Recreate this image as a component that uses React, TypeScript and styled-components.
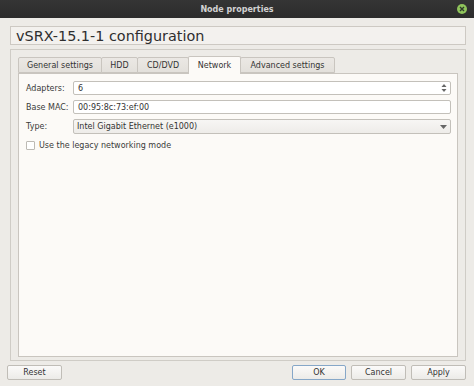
import React, { useState } from 'react';
import styled, { createGlobalStyle } from 'styled-components';

const GlobalStyle = createGlobalStyle`
  html, body {
    margin: 0;
    padding: 0;
    background: #edebe7;
  }
  body {
    font-family: "DejaVu Sans", "Liberation Sans", sans-serif;
    font-size: 8px;
    color: #3c3c3c;
  }
`;

const Window = styled.div`
  width: 474px;
  height: 386px;
  display: flex;
  flex-direction: column;
  background: #edebe7;
  overflow: hidden;
`;

const TitleBar = styled.div`
  height: 18px;
  flex: none;
  display: flex;
  align-items: center;
  justify-content: center;
  position: relative;
  background: linear-gradient(#353535, #2c2c2c);
  color: #d2d2d2;
  font-weight: bold;
  font-size: 8px;
`;

const CloseButton = styled.div`
  position: absolute;
  right: 7px;
  top: 4px;
  width: 10px;
  height: 10px;
  border-radius: 50%;
  background: #8fc45b;
  display: flex;
  align-items: center;
  justify-content: center;
`;

const Body = styled.div`
  flex: 1;
  display: flex;
  flex-direction: column;
  padding: 8px 8px 8px 7px;
  gap: 4px;
`;

const Header = styled.div`
  height: 19px;
  margin-left: 3px;
  box-sizing: border-box;
  border: 1px solid #cdc9c3;
  background: #f3f1ee;
  display: flex;
  align-items: center;
  padding-left: 5px;
  font-size: 14.4px;
  color: #2e2e2e;
`;

const GroupBox = styled.div`
  height: 312px;
  margin-left: 3px;
  box-sizing: border-box;
  border: 1px solid #cfccc6;
  padding: 6px 7px 3px 7px;
  display: flex;
  flex-direction: column;
`;

const TabBar = styled.div`
  display: flex;
  align-items: flex-end;
  height: 17px;
  flex: none;
  position: relative;
  z-index: 1;
`;

const Tab = styled.div<{ $w: number; $active?: boolean }>`
  width: ${(p) => p.$w}px;
  box-sizing: border-box;
  height: ${(p) => (p.$active ? 18 : 16)}px;
  margin-bottom: ${(p) => (p.$active ? -1 : 0)}px;
  margin-left: -1px;
  &:first-child {
    margin-left: 0;
  }
  border: 1px solid #c9c5bf;
  border-bottom: ${(p) => (p.$active ? 'none' : '1px solid #c9c5bf')};
  border-radius: 2px 2px 0 0;
  background: ${(p) => (p.$active ? '#fcfaf7' : 'linear-gradient(#ebe8e4, #e3e0db)')};
  display: flex;
  align-items: center;
  justify-content: center;
  padding-top: ${(p) => (p.$active ? 0 : 1)}px;
  color: #333;
  z-index: ${(p) => (p.$active ? 2 : 1)};
`;

const Panel = styled.div`
  flex: 1;
  border: 1px solid #c9c5bf;
  background: #fcfaf7;
  padding: 7px 6px 0 7px;
  display: flex;
  flex-direction: column;
`;

const FormGrid = styled.div`
  display: grid;
  grid-template-columns: 47px 1fr;
  row-gap: 5px;
  align-items: center;
`;

const Label = styled.div`
  font-size: 8px;
  color: #3a3a3a;
`;

const Field = styled.div<{ $combo?: boolean }>`
  height: ${(p) => (p.$combo ? 15 : 14)}px;
  box-sizing: border-box;
  border: 1px solid #c3c0ba;
  border-radius: 2px;
  background: ${(p) => (p.$combo ? 'linear-gradient(#f7f6f4, #eeece9)' : '#ffffff')};
  display: flex;
  align-items: center;
  padding-left: ${(p) => (p.$combo ? 3 : 4)}px;
  padding-right: 3px;
  color: #333;
`;

const FieldText = styled.span`
  flex: 1;
`;

const CheckRow = styled.label`
  display: flex;
  align-items: center;
  gap: 4px;
  margin-top: 7px;
  color: #3a3a3a;
`;

const CheckBox = styled.span`
  width: 9px;
  height: 9px;
  box-sizing: border-box;
  border: 1px solid #bdbab4;
  border-radius: 1px;
  background: #fff;
`;

const ButtonRow = styled.div`
  display: flex;
  align-items: center;
  height: 15px;
  gap: 5px;
`;

const Spacer = styled.div`
  flex: 1;
`;

const Button = styled.button<{ $default?: boolean }>`
  width: ${(p) => (p.$default ? 54 : 55)}px;
  height: 15px;
  box-sizing: border-box;
  border: 1px solid ${(p) => (p.$default ? '#86a7c8' : '#c0bdb7')};
  border-radius: 2px;
  background: linear-gradient(#fbfaf9, #ecebe8);
  font-family: inherit;
  font-size: 8px;
  color: #333;
  padding: 0;
`;

const SpinArrows = () => (
  <svg width="6" height="10" viewBox="0 0 6 10">
    <path d="M0.5 4 L3 1 L5.5 4 Z" fill="#666" />
    <path d="M0.5 6 L3 9 L5.5 6 Z" fill="#666" />
  </svg>
);

const ComboArrow = () => (
  <svg width="7" height="4" viewBox="0 0 7 4">
    <path d="M0 0 L7 0 L3.5 4 Z" fill="#666" />
  </svg>
);

const tabs = [
  { name: 'General settings', w: 84 },
  { name: 'HDD', w: 37 },
  { name: 'CD/DVD', w: 52 },
  { name: 'Network', w: 53 },
  { name: 'Advanced settings', w: 95 },
];

export default function App() {
  const [active, setActive] = useState('Network');
  const [legacy, setLegacy] = useState(false);

  return (
    <Window>
      <GlobalStyle />
      <TitleBar>
        Node properties
        <CloseButton>
          <svg width="6" height="6" viewBox="0 0 6 6">
            <path d="M1 1 L5 5 M5 1 L1 5" stroke="#2f3a2a" strokeWidth="1.4" />
          </svg>
        </CloseButton>
      </TitleBar>
      <Body>
        <Header>vSRX-15.1-1 configuration</Header>
        <GroupBox>
          <TabBar>
            {tabs.map((t) => (
              <Tab key={t.name} $w={t.w} $active={active === t.name} onClick={() => setActive(t.name)}>
                {t.name}
              </Tab>
            ))}
          </TabBar>
          <Panel>
            <FormGrid>
              <Label>Adapters:</Label>
              <Field>
                <FieldText>6</FieldText>
                <SpinArrows />
              </Field>
              <Label>Base MAC:</Label>
              <Field>
                <FieldText>00:95:8c:73:ef:00</FieldText>
              </Field>
              <Label>Type:</Label>
              <Field $combo>
                <FieldText>Intel Gigabit Ethernet (e1000)</FieldText>
                <ComboArrow />
              </Field>
            </FormGrid>
            <CheckRow onClick={() => setLegacy(!legacy)}>
              <CheckBox />
              Use the legacy networking mode
            </CheckRow>
          </Panel>
        </GroupBox>
        <ButtonRow>
          <Button>Reset</Button>
          <Spacer />
          <Button $default>OK</Button>
          <Button>Cancel</Button>
          <Button>Apply</Button>
        </ButtonRow>
      </Body>
    </Window>
  );
}
